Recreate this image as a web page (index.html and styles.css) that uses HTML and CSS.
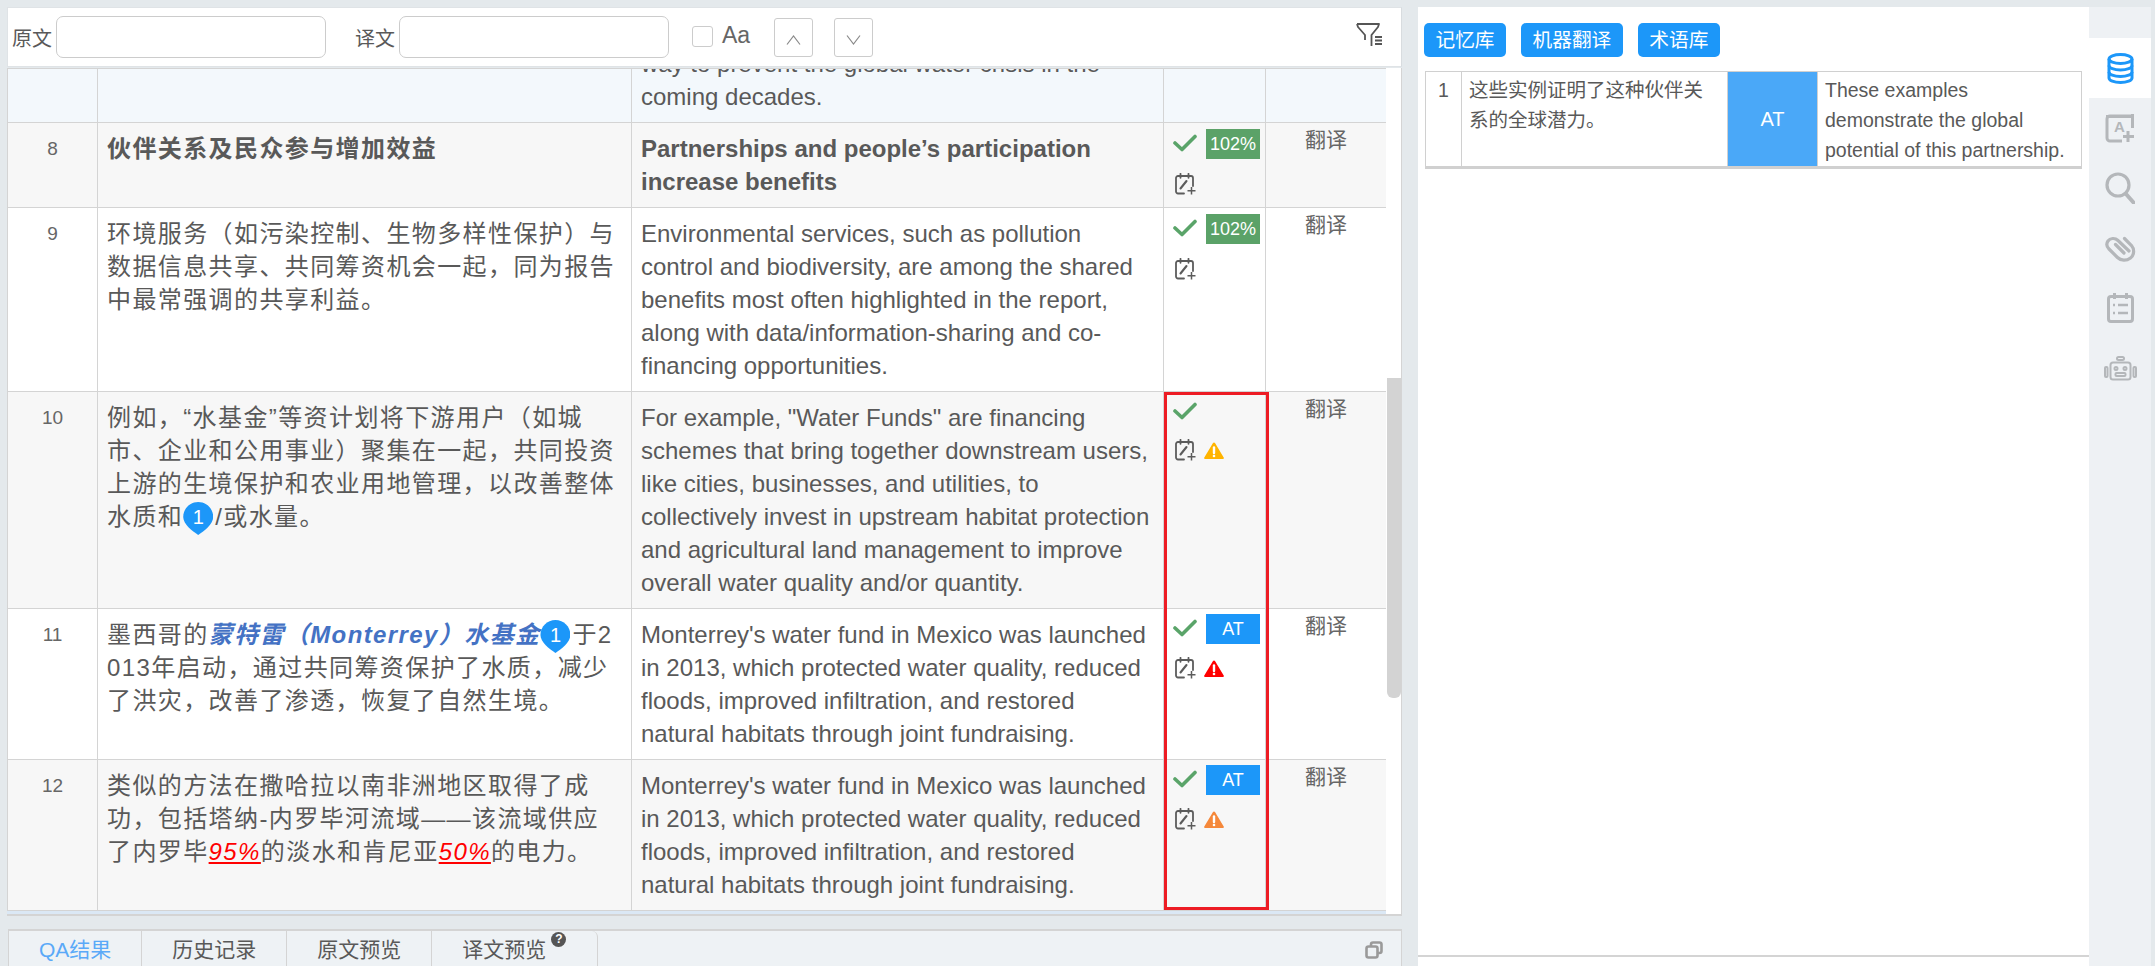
FILE: index.html
```html
<!DOCTYPE html>
<html lang="zh">
<head>
<meta charset="utf-8">
<title>翻译编辑器</title>
<link rel="stylesheet" href="styles.css">
</head>
<body>
<svg class="defs" width="0" height="0" aria-hidden="true">
  <symbol id="i-check" viewBox="0 0 24 18"><path d="M2 9l7 6.500L22 2.500" fill="none" stroke="#5aa469" stroke-width="3.600" stroke-linecap="round" stroke-linejoin="round"/></symbol>
  <symbol id="i-doc" viewBox="0 0 21 22"><path d="M9 20.500H3a2 2 0 0 1-2-2V5a2 2 0 0 1 2-2h13a2 2 0 0 1 2 2v8" fill="none" stroke="#5c5c5c" stroke-width="1.800" stroke-linecap="round"/><path d="M5.500 .8v4M13.500 .8v4" fill="none" stroke="#5c5c5c" stroke-width="1.800" stroke-linecap="round"/><path d="M5.500 15.500l6-7.500" fill="none" stroke="#5c5c5c" stroke-width="2.100" stroke-linecap="round"/><path d="M16.500 14v7.500M12.500 17.800h8" fill="none" stroke="#5c5c5c" stroke-width="1.500"/></symbol>
  <symbol id="i-warn" viewBox="0 0 20 17"><path d="M10 .5a1.200 1.200 0 0 1 1 .6l8.700 14.300a1 1 0 0 1-.9 1.600H1.200a1 1 0 0 1-.9-1.600L9 1.100a1.200 1.200 0 0 1 1-.6z" fill="currentColor"/><path d="M10 5.500v5.500" stroke="#fff" stroke-width="2.400" stroke-linecap="round"/><circle cx="10" cy="14" r="1.300" fill="#fff"/></symbol>
</svg>

<div class="app">
  <main class="editor">
    <div class="searchbar">
      <label class="search-label">原文</label>
      <input class="search-input" type="text" aria-label="原文">
      <label class="search-label second">译文</label>
      <input class="search-input" type="text" aria-label="译文">
      <span class="checkbox"></span>
      <span class="case">Aa</span>
      <button class="nav-btn first-btn" aria-label="上一个"><svg width="15" height="10" viewBox="0 0 15 10"><path d="M1 9.500L7.500 1 14 9.500" fill="none" stroke="#8a8a8a" stroke-width="1.200"/></svg></button>
      <button class="nav-btn" aria-label="下一个"><svg width="15" height="10" viewBox="0 0 15 10"><path d="M1 .5L7.500 9 14 .5" fill="none" stroke="#8a8a8a" stroke-width="1.200"/></svg></button>
      <svg class="filter" width="27" height="24" viewBox="0 0 27 24"><path d="M1 1h22l-1 3-6.500 8v11M1 1l1 3 7 8v5" fill="none" stroke="#555" stroke-width="1.800" stroke-linejoin="round"/><path d="M19 14h7M19 17.500h7M19 21h7" stroke="#555" stroke-width="2"/></svg>
    </div>

    <div class="grid-panel">
      <div class="grid-scroll">
        <table class="grid">
          <colgroup><col class="c-num"><col class="c-src"><col class="c-tgt"><col class="c-status"><col class="c-act"></colgroup>
          <tbody>
            <tr class="row-current">
              <td class="num"></td>
              <td class="src"></td>
              <td class="tgt">way to prevent the global water crisis in the<br>coming decades.</td>
              <td></td><td></td>
            </tr>
            <tr class="row-alt">
              <td class="num">8</td>
              <td class="src strong">伙伴关系及民众参与增加效益</td>
              <td class="tgt strong">Partnerships and people’s participation<br>increase benefits</td>
              <td class="status-cell tm-cell"><div class="st-line"><svg class="check"><use href="#i-check"/></svg><span class="badge tm">102%</span></div><div class="st-line second"><svg class="doc"><use href="#i-doc"/></svg></div></td>
              <td class="act">翻译</td>
            </tr>
            <tr>
              <td class="num">9</td>
              <td class="src">环境服务（如污染控制、生物多样性保护）与<br>数据信息共享、共同筹资机会一起，同为报告<br>中最常强调的共享利益。</td>
              <td class="tgt">Environmental services, such as pollution<br>control and biodiversity, are among the shared<br>benefits most often highlighted in the report,<br>along with data/information-sharing and co-<br>financing opportunities.</td>
              <td class="status-cell tm-cell"><div class="st-line"><svg class="check"><use href="#i-check"/></svg><span class="badge tm">102%</span></div><div class="st-line second"><svg class="doc"><use href="#i-doc"/></svg></div></td>
              <td class="act">翻译</td>
            </tr>
            <tr class="row-alt">
              <td class="num">10</td>
              <td class="src">例如，“水基金”等资计划将下游用户（如城<br>市、企业和公用事业）聚集在一起，共同投资<br>上游的生境保护和农业用地管理，以改善整体<br>水质和<span class="pin">1</span>/或水量。</td>
              <td class="tgt">For example, "Water Funds" are financing<br>schemes that bring together downstream users,<br>like cities, businesses, and utilities, to<br>collectively invest in upstream habitat protection<br>and agricultural land management to improve<br>overall water quality and/or quantity.</td>
              <td class="status-cell"><div class="st-line"><svg class="check"><use href="#i-check"/></svg></div><div class="st-line second"><svg class="doc"><use href="#i-doc"/></svg><svg class="warn w-yellow"><use href="#i-warn"/></svg></div></td>
              <td class="act">翻译</td>
            </tr>
            <tr>
              <td class="num">11</td>
              <td class="src">墨西哥的<em class="term">蒙特雷（Monterrey）水基金</em><span class="pin">1</span>于2<br>013年启动，通过共同筹资保护了水质，减少<br>了洪灾，改善了渗透，恢复了自然生境。</td>
              <td class="tgt">Monterrey's water fund in Mexico was launched<br>in 2013, which protected water quality, reduced<br>floods, improved infiltration, and restored<br>natural habitats through joint fundraising.</td>
              <td class="status-cell at-cell"><div class="st-line"><svg class="check"><use href="#i-check"/></svg><span class="badge at">AT</span></div><div class="st-line second"><svg class="doc"><use href="#i-doc"/></svg><svg class="warn w-red"><use href="#i-warn"/></svg></div></td>
              <td class="act">翻译</td>
            </tr>
            <tr class="row-alt">
              <td class="num">12</td>
              <td class="src">类似的方法在撒哈拉以南非洲地区取得了成<br>功，包括塔纳-内罗毕河流域——该流域供应<br>了内罗毕<em class="num-flag">95%</em>的淡水和肯尼亚<em class="num-flag">50%</em>的电力。</td>
              <td class="tgt">Monterrey's water fund in Mexico was launched<br>in 2013, which protected water quality, reduced<br>floods, improved infiltration, and restored<br>natural habitats through joint fundraising.</td>
              <td class="status-cell at-cell"><div class="st-line"><svg class="check"><use href="#i-check"/></svg><span class="badge at">AT</span></div><div class="st-line second"><svg class="doc"><use href="#i-doc"/></svg><svg class="warn w-orange"><use href="#i-warn"/></svg></div></td>
              <td class="act">翻译</td>
            </tr>
          </tbody>
        </table>
        <div class="next-row"></div>
        <div class="red-frame"></div>
      </div>
      <div class="scrollbar"><div class="thumb"></div></div>
    </div>

    <div class="tabs">
      <span class="tab active">QA结果</span>
      <span class="tab">历史记录</span>
      <span class="tab">原文预览</span>
      <span class="tab last">译文预览<span class="help">?</span></span>
      <svg class="copy" width="18" height="18" viewBox="0 0 18 18"><path d="M6 5V3.500A2 2 0 0 1 8 1.500h6.500a2 2 0 0 1 2 2V10a2 2 0 0 1-2 2H13" fill="none" stroke="#9a9a9a" stroke-width="2.600"/><rect x="1.500" y="5.500" width="11" height="11" rx="2" fill="none" stroke="#9a9a9a" stroke-width="2.600"/></svg>
    </div>
  </main>

  <aside class="side">
    <div class="side-top">
      <span class="lib-btn">记忆库</span>
      <span class="lib-btn">机器翻译</span>
      <span class="lib-btn">术语库</span>
    </div>
    <table class="match">
      <colgroup><col class="m-num"><col class="m-src"><col class="m-type"><col class="m-tgt"></colgroup>
      <tbody><tr>
        <td class="m-n">1</td>
        <td class="m-zh">这些实例证明了这种伙伴关系的全球潜力。</td>
        <td class="m-at">AT</td>
        <td class="m-en">These examples demonstrate the global potential of this partnership.</td>
      </tr></tbody>
    </table>
    <div class="side-fill"></div>
    <div class="side-foot"></div>
  </aside>

  <nav class="rail">
    <div class="rail-item on"><svg width="27" height="31" viewBox="0 0 27 31"><g fill="none" stroke="#1c97f9" stroke-width="3"><ellipse cx="13.500" cy="6" rx="11.500" ry="4.500"/><path d="M2 6v19c0 2.500 5 4.500 11.500 4.500S25 27.500 25 25V6"/><path d="M2 12.500c0 2.500 5 4.500 11.500 4.500S25 15 25 12.500M2 19c0 2.500 5 4.500 11.500 4.500S25 21.500 25 19"/></g></svg></div>
    <div class="rail-item"><svg width="30" height="30" viewBox="0 0 30 30"><g fill="none" stroke="#b4b7ba" stroke-width="3"><path d="M26 3H5a3 3 0 0 0-3 3v19a3 3 0 0 0 3 3h12"/><path d="M27.500 1v14"/><path d="M23 18v11M18 23.500h11"/></g><path d="M1 2h25v3H1z" fill="#b4b7ba"/><text x="9" y="19" class="rail-a">A</text></svg></div>
    <div class="rail-item"><svg width="30" height="32" viewBox="0 0 30 32"><circle cx="13" cy="13" r="11" fill="none" stroke="#b4b7ba" stroke-width="3.200"/><path d="M21 22l7.500 8.500" stroke="#b4b7ba" stroke-width="4" stroke-linecap="round"/></svg></div>
    <div class="rail-item"><svg width="31" height="27" viewBox="0 0 31 27"><path d="M24 16L13 5.500c-3-3-8-2.500-10 .5s-1 6 1 8l8.500 8.500c3.500 3.500 9 3.500 13 .5s4-9 1-12.500L19.500 3.500M19 18l-8.500-8.500" fill="none" stroke="#b4b7ba" stroke-width="3.200" stroke-linecap="round"/></svg></div>
    <div class="rail-item"><svg width="27" height="30" viewBox="0 0 27 30"><rect x="1.500" y="3.500" width="24" height="25" rx="2.500" fill="none" stroke="#b4b7ba" stroke-width="3"/><path d="M7.500 0v6M19.500 0v6" stroke="#b4b7ba" stroke-width="3"/><path d="M11 12h10M11 20h10M6 12h2M6 20h2" stroke="#b4b7ba" stroke-width="2.600"/></svg></div>
    <div class="rail-item"><svg width="33" height="25" viewBox="0 0 33 25"><g fill="none" stroke="#b4b7ba" stroke-width="2"><rect x="13" y="1" width="7" height="3" rx="1.500"/><rect x="6.500" y="6.500" width="20" height="17" rx="2.500"/><rect x="1" y="11" width="2.500" height="10" rx="1"/><rect x="29.500" y="11" width="2.500" height="10" rx="1"/><circle cx="12" cy="12.500" r="1.500"/><circle cx="21" cy="12.500" r="1.500"/><rect x="11.500" y="17" width="10" height="3" rx="1"/></g></svg></div>
  </nav>
</div>
</body>
</html>
```

FILE: styles.css
```css
* { box-sizing: border-box; }
html, body { margin: 0; height: 966px; overflow: hidden; }
body {
  background: #e4e9ec;
  font-family: "Liberation Sans", "Noto Sans CJK SC", sans-serif;
  color: #595959;
}
.defs { display: block; height: 0; }
.app { display: flex; height: 966px; padding-top: 7px; padding-left: 7px; }

/* left editor */
.editor { width: 1395px; display: flex; flex-direction: column; height: 959px; flex: none; }
.searchbar {
  height: 60px; flex: none; background: #fff; display: flex; align-items: center;
  padding-left: 4px; border: 1px solid #dfe3e6; border-right: 1px solid #d8dcdf;
}
.search-label { font-size: 20px; width: 40px; margin-right: 4px; color: #595959; }
.search-label.second { margin-left: 29px; }
.search-input { width: 270px; height: 42px; border: 1px solid #ccc; border-radius: 7px; background: #fff; }
.checkbox { width: 21px; height: 21px; border: 1px solid #ccc; border-radius: 3px; margin-left: 23px; margin-top: -2px; }
.case { font-size: 23px; margin-left: 9px; margin-top: -4px; width: 26px; color: #666; }
.nav-btn {
  width: 39px; height: 39px; padding: 6px 0 0; background: #fff; border: 1px solid #ccc; border-radius: 3px;
  margin-left: 21px; display: flex; align-items: center; justify-content: center;
}
.nav-btn.first-btn { margin-left: 26px; }
.filter { margin-left: auto; margin-right: 18px; margin-top: -4px; }

.grid-panel { flex: none; height: 848px; margin-top: 1px; display: flex; background: #fff; border-bottom: 2px solid #d4d4d4; border-right: 1px solid #d4d4d4; }
.grid-scroll {
  width: 1379px; flex: none; position: relative; overflow: hidden; display: flex; flex-direction: column; justify-content: flex-end;
  border-top: 1px solid #d4d4d4;
}
.grid {
  width: 1379px; flex: none; table-layout: fixed; border-collapse: collapse;
  font-size: 24px; line-height: 33px;
}
.c-num { width: 90px; } .c-src { width: 534px; } .c-tgt { width: 532px; } .c-status { width: 102px; } .c-act { width: 121px; }
.grid td { border: 1px solid #d4d4d4; padding: 9px; vertical-align: top; overflow: hidden; }
.row-current td { background: #f3f8fc; }
.row-alt td { background: #f7f7f7; }
.grid td.num { text-align: center; font-size: 19px; color: #666; }
.grid td.src { letter-spacing: 1.4px; white-space: nowrap; }
.strong { font-weight: bold; }
.term { font-weight: bold; font-style: italic; color: #4472c4; }
.num-flag { font-style: italic; color: #f00; text-decoration: underline; }
.pin {
  display: inline-block; width: 30px; height: 33px; margin: -3px 2px -3px 0; vertical-align: top; position: relative; top: 5px;
  background: #1c97f9; color: #fff; font-size: 20px; line-height: 30px; text-align: center; letter-spacing: 0; font-weight: normal;
  clip-path: path("M15 0C23.300 0 30 6.700 30 15C30 22 21 29 15 33C9 29 0 22 0 15C0 6.700 6.700 0 15 0Z");
}
.grid td.status-cell { padding: 5px 4px 0 9px; }
.grid td.tm-cell { padding-top: 6px; }
.st-line { display: flex; align-items: center; height: 30px; }
.st-line.second { margin-top: 12px; height: 22px; }
.tm-cell .st-line.second { margin-top: 14px; }
.at-cell .st-line.second { margin-top: 13px; }
.check { width: 24px; height: 18px; flex: none; margin-top: -3px; }
.doc { width: 21px; height: 22px; flex: none; margin-left: 2px; }
.badge { width: 54px; height: 30px; margin-left: 9px; color: #fff; font-size: 18px; line-height: 30px; text-align: center; flex: none; }
.tm { background: #5ba268; }
.at { background: #1c97f9; }
.warn { width: 20px; height: 17px; flex: none; margin-left: 8px; }
.w-yellow { color: #ffb400; } .w-red { color: #f00; } .w-orange { color: #f5883a; }
.grid td.act { text-align: center; font-size: 21px; padding: 0; color: #666; }
.next-row { height: 3px; flex: none; background: #dbe8f5; }
.red-frame { position: absolute; left: 1157px; bottom: 4px; width: 105px; height: 518px; border: 3px solid #ed1c24; pointer-events: none; }

.scrollbar { flex: 1; background: #fff; padding-left: 1px; }
.thumb { height: 320px; margin-top: 310px; background: #d3d3d3; border-radius: 0 0 6px 6px; }

.tabs {
  flex: none; height: 37px; margin-top: 13px; margin-left: 1px; background: #eef2f5; display: flex; align-items: flex-start;
  border-top: 2px solid #d4d4d4; border-right: 1px solid #d4d4d4; border-left: 1px solid #d4d4d4; overflow: hidden;
}
.tab { font-size: 21px; line-height: 38px; padding: 0 30px; border-right: 1px solid #d4d4d4; height: 40px; color: #595959; display: flex; }
.tab.active { color: #5aa9f8; }
.tab.last { padding-right: 31px; border-radius: 0 6px 0 0; }
.help {
  width: 15px; height: 15px; border-radius: 50%; background: #555; color: #fff; font-size: 12px; font-weight: bold;
  line-height: 15px; text-align: center; margin-left: 5px; margin-top: 1px;
}
.copy { margin-left: auto; margin-right: 18px; margin-top: 10px; }

/* right panel */
.side { flex: none; width: 671px; margin-left: 16px; height: 959px; background: #fff; display: flex; flex-direction: column; }
.side-top { display: flex; gap: 15px; padding: 16px 0 0 6px; height: 64px; flex: none; }
.lib-btn { height: 34px; padding: 0 11.5px; background: #1c97f9; color: #fff; border-radius: 5px; font-size: 19.700px; line-height: 34px; }
.match {
  margin-left: 7px; width: 656px; flex: none; table-layout: fixed; border-collapse: collapse;
  line-height: 30px; border: 1px solid #d0d0d0; border-bottom-width: 3px;
}
.m-num { width: 36px; } .m-src { width: 266px; } .m-type { width: 90px; } .m-tgt { width: 264px; }
.match td { border: 1px solid #d0d0d0; border-bottom: 0; padding: 3px 7px 1px; vertical-align: top; font-size: 19.500px; }
.match td.m-n { text-align: center; padding: 3px 0 1px; }
.match td.m-at { background: #4aa8f8; color: #fff; text-align: center; vertical-align: middle; font-size: 20px; padding: 0; }
.side-fill { flex: 1; }
.side-foot { height: 11px; flex: none; border-top: 2px solid #d4d4d4; }

/* icon rail */
.rail { flex: none; width: 62px; height: 959px; background: #eef1f4; padding-top: 31px; }
.rail-item { height: 60px; display: flex; align-items: center; justify-content: center; }
.rail-item.on { background: #fff; }
.rail-a { font: bold 15px "Liberation Sans", sans-serif; fill: #b4b7ba; }
```
